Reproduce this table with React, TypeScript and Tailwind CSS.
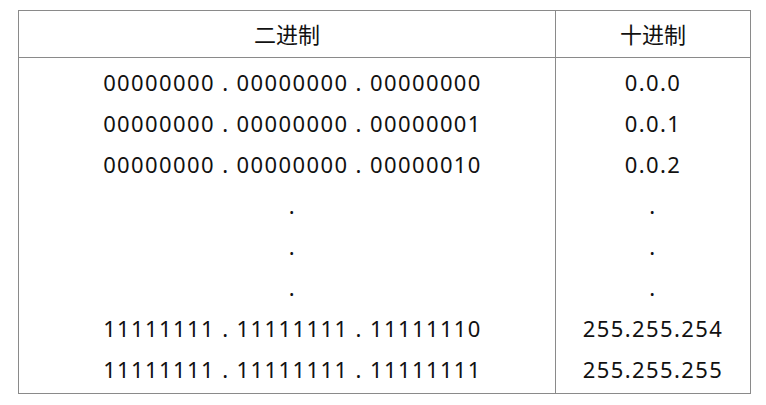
import React from "react";

const rows: [string, string][] = [
  ["00000000 . 00000000 . 00000000", "0.0.0"],
  ["00000000 . 00000000 . 00000001", "0.0.1"],
  ["00000000 . 00000000 . 00000010", "0.0.2"],
  [".", "."],
  [".", "."],
  [".", "."],
  ["11111111 . 11111111 . 11111110", "255.255.254"],
  ["11111111 . 11111111 . 11111111", "255.255.255"],
];

const font = {
  fontFamily: '"Noto Sans", "Noto Sans CJK SC", sans-serif',
};

const App = () => {
  return (
    <div className="w-[766px] h-[405px] bg-white pt-[10px] pl-[18px]" style={font}>
      <div className="w-[733px] border border-[#8a8a8a] text-[22px] text-[#111]">
        <div className="grid grid-cols-[537px_194px] h-[47px] border-b border-[#8a8a8a]">
          <div className="flex items-center justify-center border-r border-[#8a8a8a]">二进制</div>
          <div className="flex items-center justify-center">十进制</div>
        </div>
        <div className="grid grid-cols-[537px_194px] tracking-[1.4px]">
          <div className="border-r border-[#8a8a8a] pt-[4px] pb-[3px] pl-[11px]">
            {rows.map(([bin], i) => (
              <div key={i} className="h-[41px] leading-[41px] text-center whitespace-pre">
                {bin}
              </div>
            ))}
          </div>
          <div className="pt-[4px] pb-[3px]">
            {rows.map(([, dec], i) => (
              <div key={i} className="h-[41px] leading-[41px] text-center">
                {dec}
              </div>
            ))}
          </div>
        </div>
      </div>
    </div>
  );
};

export default App;
